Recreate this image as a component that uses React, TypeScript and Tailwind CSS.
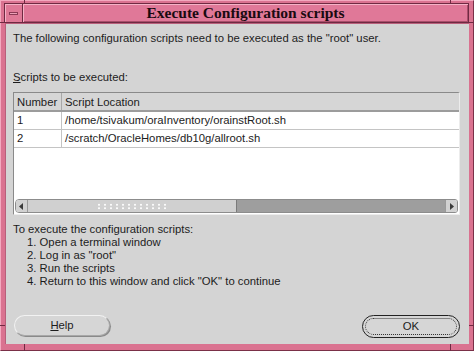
import React from 'react';

const sans = { fontFamily: '"Liberation Sans", Arial, sans-serif' };

const Tick: React.FC<{ className: string }> = ({ className }) => (
  <div className={`absolute bg-[#6f2a42] ${className}`} />
);

const rows = [
  { n: '1', path: '/home/tsivakum/oraInventory/orainstRoot.sh' },
  { n: '2', path: '/scratch/OracleHomes/db10g/allroot.sh' },
];

const ScrollBar: React.FC = () => (
  <div className="flex h-[14px] mx-[1px] mb-[1px] border border-[#8c8c8c] rounded-l-[4px] rounded-r-[3px] overflow-hidden">
    <div className="w-[12px] flex items-center justify-center bg-[#d2d2d2] border-r border-[#9a9a9a]">
      <svg width="5" height="7" viewBox="0 0 5 7"><path d="M4 0 L0 3.5 L4 7 Z" fill="#3a3a3a" /></svg>
    </div>
    <div className="w-[209px] bg-[#d0d0d0] border-r border-[#7a7a7a] flex items-center justify-center">
      <div className="w-[72px] h-[7px] bg-[radial-gradient(circle,#ffffff_0.8px,transparent_1.2px)] bg-[length:6px_3.5px] opacity-90" />
    </div>
    <div className="flex-1 bg-[#9e9e9e]" />
    <div className="w-[12px] flex items-center justify-center bg-[#d2d2d2] border-l border-[#9a9a9a]">
      <svg width="5" height="7" viewBox="0 0 5 7"><path d="M1 0 L5 3.5 L1 7 Z" fill="#3a3a3a" /></svg>
    </div>
  </div>
);

export default function App() {
  return (
    <div className="w-[474px] h-[351px] relative bg-[#da7290] overflow-hidden text-[#1c1c1c]" style={sans}>
      {/* frame decorations */}
      <div className="absolute inset-0 border border-[#f3a9bf] border-r-[#7a3048] border-b-[#7a3048]" />
      <Tick className="left-[24px] top-0 w-[1px] h-[4px]" />
      <Tick className="left-[450px] top-0 w-[1px] h-[4px]" />
      <Tick className="left-[24px] bottom-0 w-[1px] h-[8px]" />
      <Tick className="left-[450px] bottom-0 w-[1px] h-[8px]" />
      <Tick className="left-0 top-[22px] w-[5px] h-[1px]" />
      <Tick className="right-0 top-[22px] w-[6px] h-[1px]" />
      <Tick className="left-0 top-[325px] w-[5px] h-[1px]" />
      <Tick className="right-0 top-[325px] w-[6px] h-[1px]" />

      <div className="relative flex flex-col h-full pt-[3px] pl-[4px] pr-[5px] pb-[7px]">
        {/* title bar */}
        <div className="flex h-[20px] border border-[#6f2a42]">
          <div className="w-[18px] flex items-center justify-center bg-[#df7997] border-r border-[#6f2a42] shadow-[inset_1px_1px_0_#f6b3c7]">
            <div className="w-[9px] h-[3px] bg-[#eaa0b6] border border-[#8a3a55]" />
          </div>
          <div className="flex-1 flex items-center justify-center bg-[#e07898] shadow-[inset_1px_1px_0_#f6b3c7,inset_-1px_-1px_0_#a84d6a]">
            <span className="text-[15.5px] font-bold leading-none text-[#1a0a10]" style={{ fontFamily: '"Liberation Serif", "Times New Roman", serif' }}>
              Execute Configuration scripts
            </span>
          </div>
        </div>

        {/* content */}
        <div className="flex-1 ml-[1px] bg-[#d4d4d4] border-l border-t border-[#b85f7b] pt-[8px] pl-[7px] pr-[9px] text-[11.3px]">
          <div className="h-[13px] leading-[13px]">The following configuration scripts need to be executed as the "root" user.</div>
          <div className="h-[13px] leading-[13px] mt-[26px]"><span className="underline">S</span>cripts to be executed:</div>

          {/* table */}
          <div className="mt-[8px] h-[123px] flex flex-col bg-white border border-[#8a8a8a] border-r-[#ececec] border-b-[#ececec] rounded-tr-[2px]">
            <div className="flex h-[19px] bg-[#d6d6d6] border-b-2 border-[#9c9c9c] leading-[18px]">
              <div className="w-[48px] pl-[3px] border-r border-[#a8a8a8]">Number</div>
              <div className="flex-1 pl-[3px]">Script Location</div>
            </div>
            {rows.map((r) => (
              <div key={r.n} className="flex h-[18px] border-b border-[#c4c4c4] leading-[17px]">
                <div className="w-[48px] pl-[3px] border-r border-[#c4c4c4]">{r.n}</div>
                <div className="flex-1 pl-[3px]">{r.path}</div>
              </div>
            ))}
            <div className="flex-1" />
            <ScrollBar />
          </div>

          <div className="mt-[8px] leading-[13px]">
            <div>To execute the configuration scripts:</div>
            <div className="pl-[14px]">1. Open a terminal window</div>
            <div className="pl-[14px]">2. Log in as "root"</div>
            <div className="pl-[14px]">3. Run the scripts</div>
            <div className="pl-[14px]">4. Return to this window and click "OK" to continue</div>
          </div>

          <div className="mt-[27px] flex justify-between items-start">
            <button className="ml-[1px] w-[96px] h-[21px] rounded-full bg-[#d6d6d6] border border-[#a8a8a8] border-l-[#f2f2f2] border-t-[#f2f2f2] shadow-[1px_1px_0_#8a8a8a] leading-[19px]">
              <span className="underline">H</span>elp
            </button>
            <button className="w-[98px] h-[23px] rounded-full border border-[#222] bg-[#d6d6d6] p-[2px]">
              <div className="h-full rounded-full border border-dotted border-[#333] leading-[15px]">OK</div>
            </button>
          </div>
        </div>
      </div>
    </div>
  );
}
